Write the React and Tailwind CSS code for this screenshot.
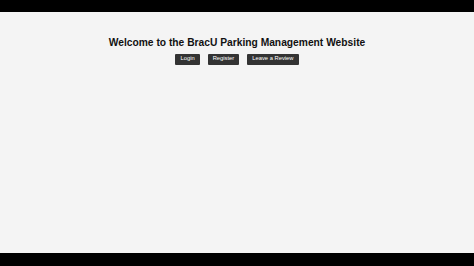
export default function App() {
  return (
    <div className="w-[474px] h-[266px] bg-black flex flex-col" style={{ fontFamily: '"Liberation Sans", Arial, sans-serif' }}>
      <div className="h-[12px] bg-black" />
      <div className="flex-1 bg-[#f4f4f4] flex flex-col items-center pt-[25px]">
        <h1 className="text-[10.25px] font-bold text-[#111] leading-[12px]">Welcome to the BracU Parking Management Website</h1>
        <div className="flex gap-[8px] mt-[4.5px]">
          <button className="h-[11.5px] px-[5px] bg-[#333] text-white text-[5.8px] rounded-[1px] leading-none">Login</button>
          <button className="h-[11.5px] px-[5px] bg-[#333] text-white text-[5.8px] rounded-[1px] leading-none">Register</button>
          <button className="h-[11.5px] px-[5px] bg-[#333] text-white text-[5.8px] rounded-[1px] leading-none">Leave a Review</button>
        </div>
      </div>
      <div className="h-[13px] bg-black" />
    </div>
  );
}
